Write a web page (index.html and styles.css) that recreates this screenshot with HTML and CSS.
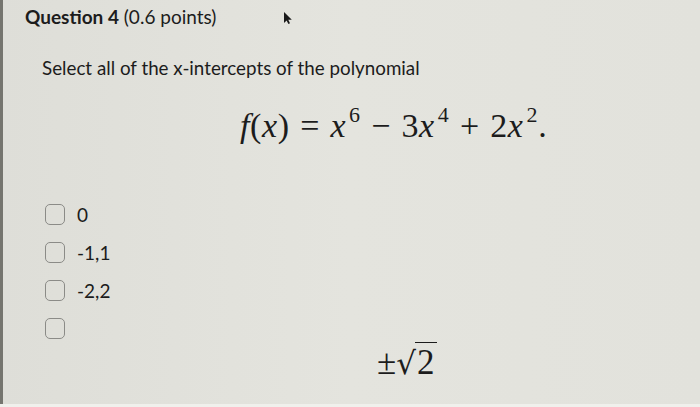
FILE: index.html
```html
<!DOCTYPE html>
<html>
<head>
<meta charset="utf-8">
<link rel="stylesheet" href="styles.css">
</head>
<body>
<div class="page">
  <div class="edge"></div>
  <div class="content">
    <h1 class="title"><b>Question 4</b> (0.6 points)</h1>
    <p class="prompt">Select all of the x-intercepts of the polynomial</p>
    <div class="formula"><i>f</i>(<i>x</i>)<span class="op">=</span><i>x</i><sup>6</sup><span class="op">−</span>3<i>x</i><sup>4</sup><span class="op">+</span>2<i>x</i><sup>2</sup>.</div>
    <ul class="options">
      <li><span class="box"></span><span class="lbl">0</span></li>
      <li><span class="box"></span><span class="lbl">-1,1</span></li>
      <li><span class="box"></span><span class="lbl">-2,2</span></li>
      <li><span class="box"></span></li>
    </ul>
    <div class="root">±<span class="sqrt">√</span><span class="rad">2</span></div>
  </div>
  <svg class="cursor" width="10" height="14" viewBox="0 0 10 14"><path d="M1 1 L1 12 L3.6 9.4 L5.4 13 L7 12.2 L5.3 8.7 L8.8 8.7 Z" fill="#1a1a1a"/></svg>
</div>
</body>
</html>
```
FILE: styles.css
```css
html, body {
  margin: 0;
  padding: 0;
}
body {
  width: 700px;
  height: 407px;
  overflow: hidden;
  background: #e3e3dd;
  font-family: Lato, "Open Sans", sans-serif;
  color: #1c1c1c;
}
.page {
  position: relative;
  display: flex;
  width: 700px;
  height: 404px;
  border-bottom: 3px solid #f0f0ec;
  background: linear-gradient(90deg, #deded8 0%, #e4e4de 50%, #e2e2dc 100%);
}
.edge {
  width: 3px;
  background: #75756f;
  flex: none;
}
.content {
  flex: 1;
  padding-left: 22px;
}
.title {
  margin: 5px 0 0 0;
  font-size: 19px;
  font-weight: 400;
  line-height: 24px;
}
.title b {
  font-weight: 700;
}
.prompt {
  margin: 27px 0 0 17px;
  font-size: 18.8px;
  line-height: 24px;
}
.formula {
  margin: 27px 0 0 215px;
  font-family: "Liberation Serif", "DejaVu Serif", serif;
  font-size: 34px;
  line-height: 38px;
  letter-spacing: 0.6px;
}
.formula .op {
  display: inline-block;
  margin: 0 10.5px;
}
.formula sup {
  font-size: 22px;
  vertical-align: 15px;
  line-height: 0;
  margin-left: 3px;
}
.options {
  list-style: none;
  margin: 59px 0 0 20px;
  padding: 0;
  display: flex;
  flex-direction: column;
  gap: 17px;
}
.options li {
  display: flex;
  align-items: center;
  gap: 14px;
  height: 21px;
}
.box {
  width: 18px;
  height: 19px;
  border: 1.6px solid #8b8b87;
  border-radius: 5px;
  flex: none;
}
.lbl {
  font-size: 19px;
  line-height: 20px;
  margin-left: -2px;
}
.root {
  margin: 5px 0 0 352px;
  font-family: "Liberation Serif", "DejaVu Serif", serif;
  font-size: 35px;
  line-height: 38px;
}
.sqrt {
  font-family: "DejaVu Serif", serif;
  font-size: 31px;
}
.rad {
  border-top: 1.6px solid #1c1c1c;
  padding: 0 3px 0 2px;
  margin-left: -1px;
}
.cursor {
  position: absolute;
  left: 283px;
  top: 11px;
}
```
